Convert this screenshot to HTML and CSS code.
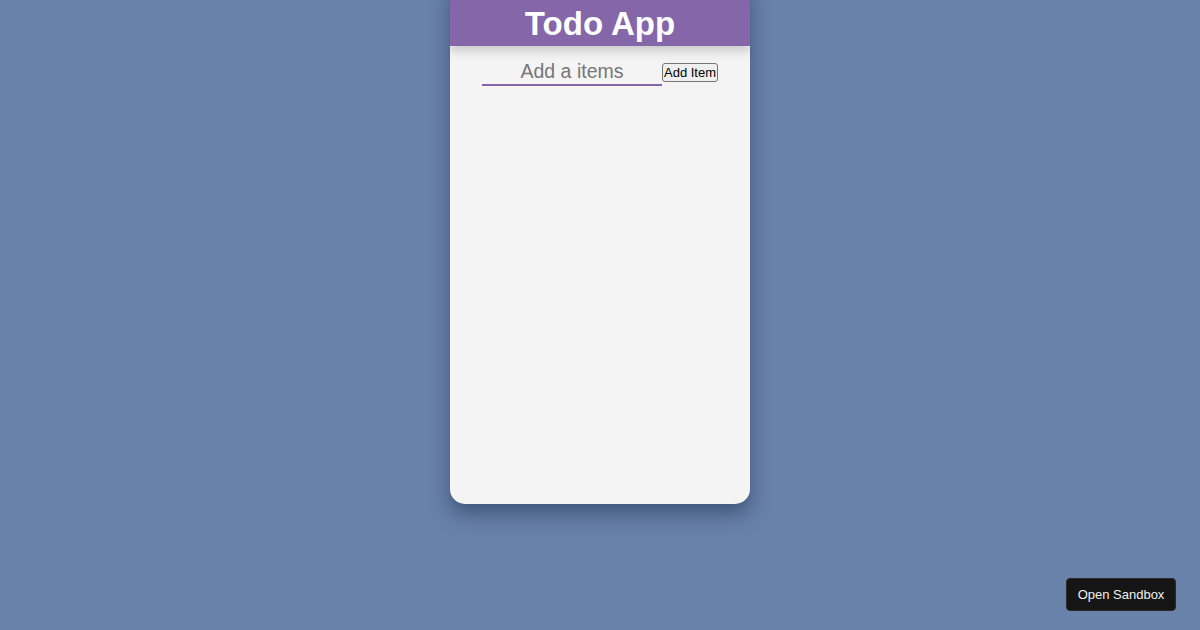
FILE: index.html
```html
<!DOCTYPE html>
<html lang="en">
<head>
<meta charset="utf-8">
<title>Todo App</title>
<link rel="stylesheet" href="styles.css">
</head>
<body>
  <main class="card">
    <header class="card-header">
      <h1 class="title">Todo App</h1>
    </header>
    <form class="add-form">
      <input class="add-input" type="text" placeholder="Add a items">
      <button class="add-btn" type="button">Add Item</button>
    </form>
    <ul class="todo-list"></ul>
  </main>
  <a class="sandbox-btn" href="#">Open Sandbox</a>
</body>
</html>
```

FILE: styles.css
```css
html, body {
  margin: 0;
  padding: 0;
  height: 100%;
}
body {
  background: #6982aa;
  font-family: "Liberation Sans", Arial, sans-serif;
  overflow: hidden;
}
.card {
  width: 300px;
  height: 524px;
  margin: -20px auto 0;
  background: #f4f4f4;
  border-radius: 15px;
  overflow: hidden;
  box-shadow: 0 10px 20px rgba(25, 40, 75, 0.5);
  display: flex;
  flex-direction: column;
}
.card-header {
  padding-top: 20px;
  background: #8566a9;
  box-shadow: 0 5px 10px rgba(0, 0, 0, 0.18);
  position: relative;
  z-index: 1;
}
.title {
  margin: 0;
  height: 46px;
  line-height: 47px;
  text-align: center;
  color: #ffffff;
  font-size: 33px;
  font-weight: bold;
  font-family: "Liberation Sans", Arial, sans-serif;
}
.add-form {
  display: flex;
  justify-content: center;
  align-items: flex-start;
  padding-top: 10px;
}
.add-input {
  width: 180px;
  box-sizing: border-box;
  border: none;
  border-bottom: 2px solid #8566a9;
  background: transparent;
  padding: 4px 0 1px;
  font-size: 19.5px;
  line-height: 23px;
  font-family: "Liberation Sans", Arial, sans-serif;
  text-align: center;
  color: #333;
  outline: none;
}
.add-input::placeholder {
  color: #777777;
}
.add-btn {
  margin-top: 7px;
  font-family: "Liberation Sans", Arial, sans-serif;
  font-size: 13px;
  padding: 1px 1px;
  background: #efefef;
  border: 1px solid #767676;
  border-radius: 3px;
  color: #000;
}
.todo-list {
  margin: 0;
  padding: 0;
  list-style: none;
}
.sandbox-btn {
  position: fixed;
  right: 24px;
  bottom: 19px;
  width: 110px;
  height: 33px;
  box-sizing: border-box;
  display: flex;
  align-items: center;
  justify-content: center;
  background: #151515;
  border: 1px solid #2a2a2a;
  border-radius: 4px;
  color: #f0f0f0;
  font-family: "Liberation Sans", Arial, sans-serif;
  font-size: 13px;
  text-decoration: none;
}
```
